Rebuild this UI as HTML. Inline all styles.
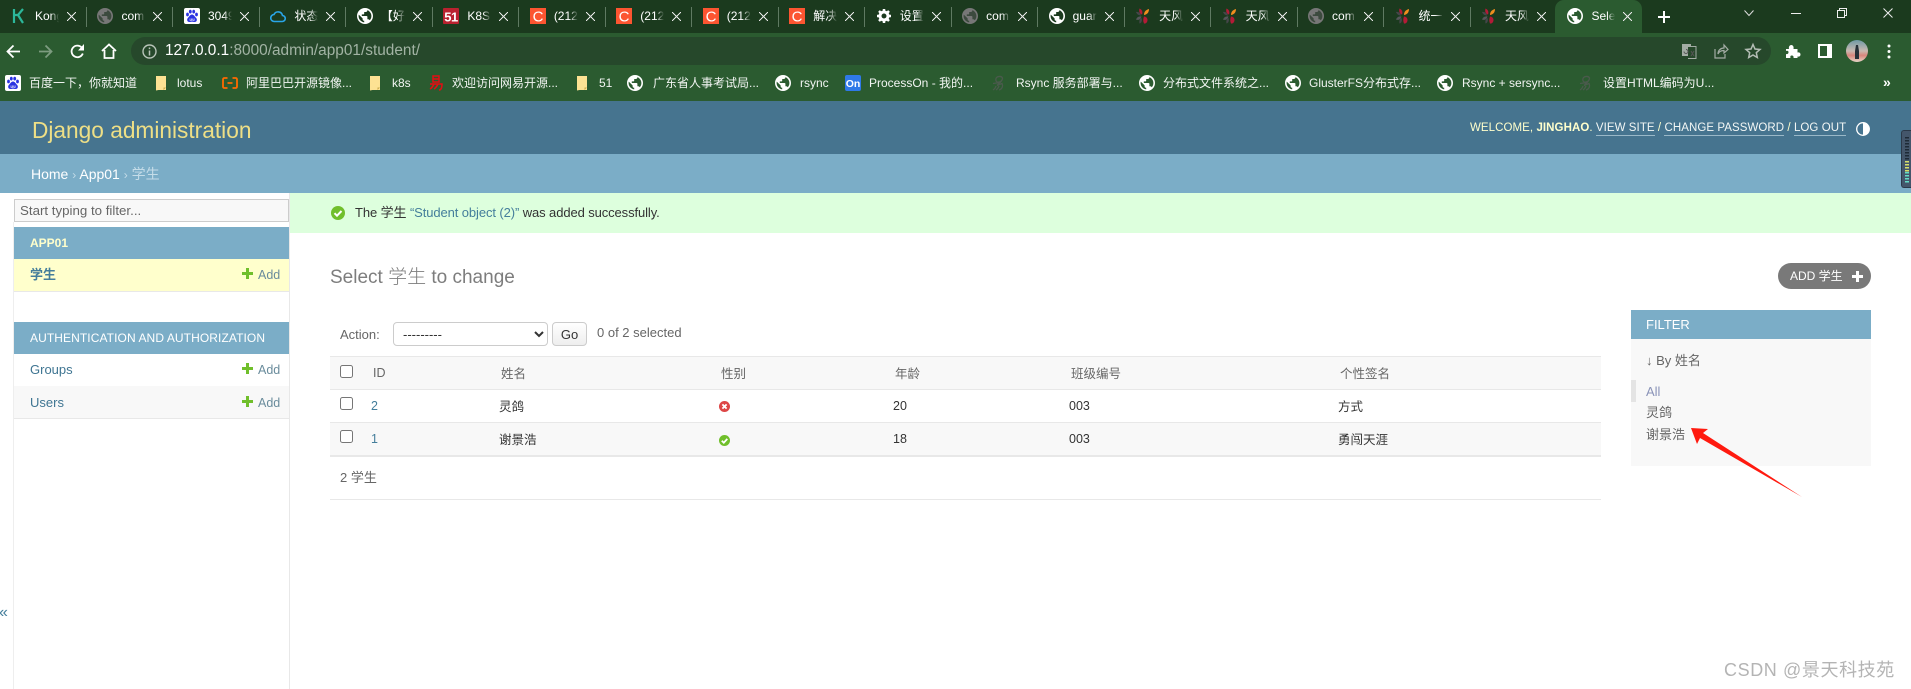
<!DOCTYPE html>
<html lang="zh"><head><meta charset="utf-8"><title>Select 学生 to change</title>
<style>
*{box-sizing:border-box}
html,body{margin:0;padding:0;width:1911px;height:689px;overflow:hidden;background:#fff;font-family:"Liberation Sans","Noto Sans CJK SC",sans-serif;font-size:13px;color:#333}
.a{position:absolute;white-space:nowrap;line-height:20px}
svg.a{line-height:0;overflow:visible}
a{text-decoration:none;color:#447e9b}
#strip{position:absolute;left:0;top:0;width:1911px;height:33px;background:#1b3a1e}
#tb{position:absolute;left:0;top:33px;width:1911px;height:68px;background:#2b5b30}
#pill{position:absolute;left:131px;top:37px;width:1640px;height:28px;border-radius:14px;background:#26482b}
.t{position:absolute;top:0;width:86px;height:33px;color:#fff;font-size:12px}
.t svg{position:absolute;left:11px;top:8px;width:16px;height:16px}
.t span{position:absolute;left:35px;top:6px;width:24px;line-height:20px;overflow:hidden;white-space:nowrap}
.t span::after{content:"";position:absolute;right:0;top:0;width:8px;height:20px;background:linear-gradient(90deg,rgba(27,58,30,0),#1b3a1e)}
.t.on span::after{background:linear-gradient(90deg,rgba(43,91,48,0),#2b5b30)}
.t i{position:absolute;left:67px;top:12px;width:9px;height:9px;background:
 linear-gradient(45deg,transparent 46%,#e8e8e8 46%,#e8e8e8 54%,transparent 54%),
 linear-gradient(-45deg,transparent 46%,#e8e8e8 46%,#e8e8e8 54%,transparent 54%)}
.t b{position:absolute;left:86px;top:7px;width:1px;height:20px;background:#5f7a62}
.bm{color:#f2f5f2;font-size:12px;top:73px}
.bi{position:absolute;top:75px;width:16px;height:16px}
#hd{position:absolute;left:0;top:101px;width:1911px;height:53px;background:#46748f}
#bc{position:absolute;left:0;top:154px;width:1911px;height:39px;background:#7badc7}
#msg{position:absolute;left:290px;top:193px;width:1621px;height:40px;background:#dfd}
#sideline{position:absolute;left:13px;top:222px;width:1px;height:467px;background:#eee}
#sideline2{position:absolute;left:289px;top:193px;width:1px;height:496px;background:#e8e8e8}
.cap{position:absolute;left:14px;width:275px;height:32px;background:#7badc7}
.row{position:absolute;left:14px;width:275px;height:33px;border-bottom:1px solid #e8e8e8}
table{position:absolute;left:330px;top:356px;width:1271px;border-collapse:separate;border-spacing:0;table-layout:fixed;font-size:12.5px}
th{height:34px;padding:0 0 0 2px;font-weight:400;color:#666;background:#f8f8f8;border-top:1px solid #e8e8e8;border-bottom:1px solid #e8e8e8;text-align:left}
td{height:33px;padding:0;border-bottom:1px solid #e8e8e8}
tr.z td{background:#f8f8f8;height:34px;border-bottom:2px solid #e8e8e8}
input[type=checkbox]{margin:0 0 0 10px;width:13px;height:13px;position:relative;top:-1px;accent-color:#fff}
th input[type=checkbox]{margin-left:8px;top:0}
.c{position:relative;top:-1px}
input::placeholder{color:#666}
</style></head><body>
<svg width="0" height="0" style="position:absolute"><defs>
<symbol id="gw" viewBox="2 2 20 20"><path fill="#fff" d="M12 2C6.480 2 2 6.480 2 12s4.480 10 10 10 10-4.480 10-10S17.520 2 12 2zm-1 17.930c-3.950-.49-7-3.850-7-7.930 0-.62.08-1.210.21-1.790L9 15v1c0 1.100.9 2 2 2v1.930zm6.900-2.540c-.26-.81-1-1.390-1.900-1.390h-1v-3c0-.55-.45-1-1-1H8v-2h2c.55 0 1-.45 1-1V7h2c1.100 0 2-.9 2-2v-.41c2.930 1.190 5 4.060 5 7.410 0 2.080-.8 3.970-2.100 5.390z"/></symbol>
<symbol id="gg" viewBox="2 2 20 20"><circle cx="12" cy="12" r="9" fill="#3c4a3e"/><path fill="#777" d="M12 2C6.480 2 2 6.480 2 12s4.480 10 10 10 10-4.480 10-10S17.520 2 12 2zm-1 17.930c-3.950-.49-7-3.850-7-7.930 0-.62.08-1.210.21-1.790L9 15v1c0 1.100.9 2 2 2v1.930zm6.900-2.540c-.26-.81-1-1.390-1.900-1.390h-1v-3c0-.55-.45-1-1-1H8v-2h2c.55 0 1-.45 1-1V7h2c1.100 0 2-.9 2-2v-.41c2.930 1.190 5 4.060 5 7.410 0 2.080-.8 3.970-2.100 5.390z"/></symbol>
<symbol id="bd" viewBox="0 0 16 16"><rect width="16" height="16" rx="2" fill="#fff"/><g fill="#2932e1"><ellipse cx="3.500" cy="6.500" rx="1.400" ry="1.900"/><ellipse cx="6.300" cy="3.600" rx="1.400" ry="1.900"/><ellipse cx="9.700" cy="3.600" rx="1.400" ry="1.900"/><ellipse cx="12.500" cy="6.500" rx="1.400" ry="1.900"/><path d="M8 6.500c2 0 2.500 2 4 3.200 1.500 1.500 1 4.300-1.500 4.300-1 0-1.500-.3-2.500-.3s-1.500.3-2.500.3c-2.500 0-3-2.800-1.500-4.300C5.500 8.500 6 6.500 8 6.500z"/></g><path d="M6 10.500v2h1.500v-2M8.800 10.500v2h1.300v-2" stroke="#fff" fill="none" stroke-width=".6"/></symbol>
<symbol id="tf" viewBox="0 0 16 16"><path d="M9 7c0-3 1.500-5 5-6 0 3-1.500 5.500-5 6z" fill="#ef8d1e"/><path d="M9 8.500c2 0 3.500 1.500 3.500 3.500S11 16 9 15.500c-1-2-1-4.500 0-7z" fill="#b31b37"/><path d="M7 6.500C5 6 3.500 4 4.500.5 7 1.500 8 4 7 6.500z" fill="#b31b37"/><path d="M6.500 8.500C4 8 2 9 1 11.500c2 1 4.500 .3 5.500-3z" fill="#55565a"/><path d="M6.500 10c-2 1-2.500 3-2 5.500 2-.5 3-3 2-5.500z" fill="#45464a"/><path d="M6 7.500C4 7.500 2 6.500 1 4c2.500-.5 4.500 1 5 3.500z" fill="#45464a"/></symbol>
<symbol id="fo" viewBox="0 0 16 16"><path d="M3 1h7l3 0v14H5.500L3 15.500z" fill="#fde293"/><path d="M10.500 15v-2.500H13z" fill="#c9a94a"/></symbol>
<symbol id="yu" viewBox="0 0 16 16"><path d="M5.500 2.500c2-1.500 5-1.500 6 .5 0 3-2.500 4.500-5.500 4-1.500-1-1.500-3-.5-4.500zM2 8.500l7-1-3 3 5-2c1.500 3-.5 6-3 6.500M5 11c-.5 2-1.500 3-3 4M8 11c-.5 1.500-1.500 3-3 4" fill="none" stroke="#4a5a4c" stroke-width="1.300"/></symbol>
</defs></svg>

<div id="strip">
<div class="t" style="left:0"><svg viewBox="0 0 16 16"><path d="M3 1v14M3 7h4l5-6M7 7l5 8" fill="none" stroke="#2cb79a" stroke-width="2.200"/></svg><span>Kong</span><i></i><b></b></div>
<div class="t" style="left:86.470px"><svg><use href="#gg"/></svg><span>com</span><i></i><b></b></div>
<div class="t" style="left:172.940px"><svg><use href="#bd"/></svg><span>3049</span><i></i><b></b></div>
<div class="t" style="left:259.410px"><svg viewBox="0 0 16 16"><path d="M4.500 13.500H12a3 3 0 0 0 .5-6A4.500 4.500 0 0 0 4 6.500a3.500 3.500 0 0 0 .5 7z" fill="none" stroke="#2aa6e8" stroke-width="1.600"/></svg><span>状态</span><i></i><b></b></div>
<div class="t" style="left:345.880px"><svg><use href="#gw"/></svg><span>【好</span><i></i><b></b></div>
<div class="t" style="left:432.350px"><svg viewBox="0 0 16 16"><rect width="16" height="16" rx="1" fill="#b9222f"/><text x="8" y="13.500" font-size="13" font-weight="700" fill="#fff" text-anchor="middle" font-family="Liberation Sans" letter-spacing="-.5">51</text></svg><span>K8S</span><i></i><b></b></div>
<div class="t" style="left:518.820px"><svg viewBox="0 0 16 16"><rect width="16" height="16" fill="#fc5531"/><text x="8" y="13.500" font-size="15" fill="#fff" text-anchor="middle" font-family="Liberation Sans">C</text></svg><span>(212</span><i></i><b></b></div>
<div class="t" style="left:605.290px"><svg viewBox="0 0 16 16"><rect width="16" height="16" fill="#fc5531"/><text x="8" y="13.500" font-size="15" fill="#fff" text-anchor="middle" font-family="Liberation Sans">C</text></svg><span>(212</span><i></i><b></b></div>
<div class="t" style="left:691.760px"><svg viewBox="0 0 16 16"><rect width="16" height="16" fill="#fc5531"/><text x="8" y="13.500" font-size="15" fill="#fff" text-anchor="middle" font-family="Liberation Sans">C</text></svg><span>(212</span><i></i><b></b></div>
<div class="t" style="left:778.230px"><svg viewBox="0 0 16 16"><rect width="16" height="16" fill="#fc5531"/><text x="8" y="13.500" font-size="15" fill="#fff" text-anchor="middle" font-family="Liberation Sans">C</text></svg><span>解决</span><i></i><b></b></div>
<div class="t" style="left:864.700px"><svg viewBox="0 0 16 16"><circle cx="8" cy="8" r="4" fill="none" stroke="#fff" stroke-width="3"/><path d="M8 1v3M8 12v3M1 8h3M12 8h3M3 3l2 2M11 11l2 2M13 3l-2 2M5 11l-2 2" stroke="#fff" stroke-width="2.500"/></svg><span>设置</span><i></i><b></b></div>
<div class="t" style="left:951.170px"><svg><use href="#gg"/></svg><span>com</span><i></i><b></b></div>
<div class="t" style="left:1037.640px"><svg><use href="#gw"/></svg><span>guar</span><i></i><b></b></div>
<div class="t" style="left:1124.110px"><svg><use href="#tf"/></svg><span>天风</span><i></i><b></b></div>
<div class="t" style="left:1210.580px"><svg><use href="#tf"/></svg><span>天风</span><i></i><b></b></div>
<div class="t" style="left:1297.050px"><svg><use href="#gg"/></svg><span>com</span><i></i><b></b></div>
<div class="t" style="left:1383.520px"><svg><use href="#tf"/></svg><span>统一</span><i></i><b></b></div>
<div class="t" style="left:1469.990px"><svg><use href="#tf"/></svg><span>天风</span><i></i></div>
<div style="position:absolute;left:1555px;top:0;width:87px;height:37px;background:#2b5b30;border-radius:9px 9px 0 0"></div>
<div class="t on" style="left:1556.460px"><svg><use href="#gw"/></svg><span>Select</span><i></i></div>
<svg class="a" style="left:1657px;top:10px" width="14" height="14" viewBox="0 0 14 14"><path d="M7 1v12M1 7h12" stroke="#fff" stroke-width="2"/></svg>
<svg class="a" style="left:1744px;top:10px" width="10" height="6" viewBox="0 0 10 6"><path d="M.5.5L5 5.500 9.500.5" fill="none" stroke="#ddd" stroke-width="1"/></svg>
<svg class="a" style="left:1791px;top:13px" width="10" height="1"><rect width="10" height="1" fill="#eee"/></svg>
<svg class="a" style="left:1837px;top:8px" width="10" height="10" viewBox="0 0 10 10"><path d="M.5 2.500h7v7h-7zM2.500 2.500v-2h7v7h-2" fill="none" stroke="#eee"/></svg>
<svg class="a" style="left:1883px;top:8px" width="10" height="10" viewBox="0 0 10 10"><path d="M.5.5l9 9M9.500.5l-9 9" stroke="#eee"/></svg>
</div>

<div id="tb"></div><div id="pill"></div>
<svg class="a" style="left:6px;top:44px" width="15" height="15" viewBox="0 0 15 15"><path d="M14 7.500H2M7.500 1.500l-6 6 6 6" fill="none" stroke="#fff" stroke-width="1.800"/></svg>
<svg class="a" style="left:38px;top:44px" width="15" height="15" viewBox="0 0 15 15"><path d="M1 7.500h12M7.500 1.500l6 6-6 6" fill="none" stroke="#7d9c80" stroke-width="1.800"/></svg>
<svg class="a" style="left:70px;top:44px" width="15" height="15" viewBox="0 0 15 15"><path d="M12.800 9.500A5.800 5.800 0 1 1 11.500 3.300" fill="none" stroke="#fff" stroke-width="1.800"/><path d="M14 0v6.500H8z" fill="#fff"/></svg>
<svg class="a" style="left:101px;top:43px" width="16" height="16" viewBox="0 0 16 16"><path d="M1 8l7-6.500L15 8M3.500 7v8h9V7" fill="none" stroke="#fff" stroke-width="1.800"/></svg>
<svg class="a" style="left:142px;top:44px" width="15" height="15" viewBox="0 0 15 15"><circle cx="7.500" cy="7.500" r="6.500" fill="none" stroke="#b8c4b9" stroke-width="1.400"/><path d="M7.500 6.500v5M7.500 3.500v1.600" stroke="#b8c4b9" stroke-width="1.500"/></svg>
<div class="a" style="left:165px;top:41px;font-size:15.400px;color:#a2b3a4"><span style="color:#fff">127.0.0.1</span>:8000/admin/app01/student/</div>
<svg class="a" style="left:1681px;top:43px" width="16" height="16" viewBox="0 0 16 16"><rect x="1" y="1" width="9" height="12" fill="#a3aca4"/><path d="M7 3.500h8v12H7" fill="#26482b" stroke="#a3aca4"/><path d="M3 8.500a2 2 0 1 0 2-2M10 8l3 5M13 8l-3 5" stroke="#555" fill="none"/></svg>
<svg class="a" style="left:1713px;top:43px" width="16" height="16" viewBox="0 0 16 16"><path d="M2 6v9h10v-4M5 11c0-4 3-6 6-6V2l4 4.500L11 10V7.500c-3 0-5 1-6 3.500z" fill="none" stroke="#a3aca4" stroke-width="1.200"/></svg>
<svg class="a" style="left:1745px;top:43px" width="16" height="16" viewBox="0 0 16 16"><path d="M8 1.500l2 4.500 5 .5-3.700 3.200 1 4.800L8 12l-4.300 2.500 1-4.800L1 6.500 6 6z" fill="none" stroke="#b4bdb5" stroke-width="1.500"/></svg>
<svg class="a" style="left:1785px;top:43px" width="16" height="16" viewBox="0 0 16 16"><path d="M1 6h3c-.5-2 .5-4 2.300-4S9 4 8.500 6h4v3.500c2-.5 3 .6 3 2s-1 2.500-3 2V15h-4c.5-1.500-.5-2.500-1.800-2.500S5 13.500 5.500 15H1v-4c1.500.5 2.500-.5 2.500-1.800S2.500 7.500 1 8z" fill="#fff"/></svg>
<svg class="a" style="left:1818px;top:44px" width="14" height="14" viewBox="0 0 14 14"><path d="M0 0h14v14H0zM2 2v10h7V2z" fill="#fff" fill-rule="evenodd"/></svg>
<svg class="a" style="left:1846px;top:40px" width="22" height="22" viewBox="0 0 22 22"><defs><linearGradient id="av" x1="0" y1="0" x2="0" y2="1"><stop offset="0" stop-color="#6f9aa5"/><stop offset=".5" stop-color="#c9b9b0"/><stop offset=".7" stop-color="#d8857c"/><stop offset="1" stop-color="#e6d6c8"/></linearGradient></defs><circle cx="11" cy="11" r="11" fill="url(#av)"/><path d="M10 5h2l1 6v8h-4V11z" fill="#263038"/></svg>
<svg class="a" style="left:1887px;top:44px" width="4" height="15" viewBox="0 0 4 15"><circle cx="2" cy="2" r="1.500" fill="#fff"/><circle cx="2" cy="7.500" r="1.500" fill="#fff"/><circle cx="2" cy="13" r="1.500" fill="#fff"/></svg>

<svg class="bi" style="left:5px"><use href="#bd"/></svg><div class="a bm" style="left:29px">百度一下，你就知道</div>
<svg class="bi" style="left:153px"><use href="#fo"/></svg><div class="a bm" style="left:177px">lotus</div>
<svg class="bi" style="left:222px" viewBox="0 0 16 16"><path d="M5.500 3H2.500Q1 3 1 4.500v7Q1 13 2.500 13h3M10.500 3h3Q15 3 15 4.500v7q0 1.500-1.500 1.500h-3M5.500 8h5" fill="none" stroke="#ff6a00" stroke-width="1.800"/></svg><div class="a bm" style="left:246px">阿里巴巴开源镜像...</div>
<svg class="bi" style="left:367px"><use href="#fo"/></svg><div class="a bm" style="left:392px">k8s</div>
<svg class="bi" style="left:428px" viewBox="0 0 16 16"><path d="M5 1h6v6H5zM5 4h6M2 9h12c0 4-1 6-3 6M6 9c-1 2-2 4-4 5M10 9c-1 2-2 4-4 5" fill="none" stroke="#e50d12" stroke-width="1.500"/></svg><div class="a bm" style="left:452px">欢迎访问网易开源...</div>
<svg class="bi" style="left:574px"><use href="#fo"/></svg><div class="a bm" style="left:599px">51</div>
<svg class="bi" style="left:627px"><use href="#gw"/></svg><div class="a bm" style="left:653px">广东省人事考试局...</div>
<svg class="bi" style="left:775px"><use href="#gw"/></svg><div class="a bm" style="left:800px">rsync</div>
<svg class="bi" style="left:845px" viewBox="0 0 16 16"><rect width="16" height="16" rx="2" fill="#2f79e8"/><text x="8" y="12" font-size="10.500" font-weight="700" fill="#fff" text-anchor="middle" font-family="Liberation Sans">On</text></svg><div class="a bm" style="left:869px">ProcessOn - 我的...</div>
<svg class="bi" style="left:991px"><use href="#yu"/></svg><div class="a bm" style="left:1016px">Rsync 服务部署与...</div>
<svg class="bi" style="left:1139px"><use href="#gw"/></svg><div class="a bm" style="left:1163px">分布式文件系统之...</div>
<svg class="bi" style="left:1285px"><use href="#gw"/></svg><div class="a bm" style="left:1309px">GlusterFS分布式存...</div>
<svg class="bi" style="left:1437px"><use href="#gw"/></svg><div class="a bm" style="left:1462px">Rsync + sersync...</div>
<svg class="bi" style="left:1578px"><use href="#yu"/></svg><div class="a bm" style="left:1603px">设置HTML编码为U...</div>
<div class="a" style="left:1883px;top:72px;color:#fff;font-size:14px;font-weight:700">»</div>

<div id="hd"></div><div id="bc"></div>
<div class="a" style="left:32px;top:120px;font-size:22.700px;font-weight:300;color:#eedf86">Django administration</div>
<div class="a" style="left:1470px;top:118px;font-size:11.500px;color:#ffc;letter-spacing:.07px">WELCOME, <b>JINGHAO</b>. <span style="border-bottom:1px solid #9ab8c8;padding-bottom:1px;color:#f3f7f5">VIEW SITE</span> / <span style="border-bottom:1px solid #9ab8c8;padding-bottom:1px;color:#f3f7f5">CHANGE PASSWORD</span> / <span style="border-bottom:1px solid #9ab8c8;padding-bottom:1px;color:#f3f7f5">LOG OUT</span></div>
<svg class="a" style="left:1856px;top:122px" width="14" height="14" viewBox="0 0 14 14"><circle cx="7" cy="7" r="6.300" fill="#46748f" stroke="#fff" stroke-width="1.300"/><path d="M7 1a6 6 0 0 1 0 12z" fill="#fff"/></svg>
<div class="a" style="left:31px;top:164px;font-size:14px;color:#fff">Home <span style="color:#c4dce8;font-size:12px">›</span> App01 <span style="color:#c4dce8;font-size:12px">›</span> <span style="color:#c4dce8">学生</span></div>

<div id="sideline"></div><div id="sideline2"></div>
<input style="position:absolute;left:14px;top:199px;width:275px;height:23px;border:1px solid #ccc;background:#f8f8f8;padding:0 5px;font:13.300px 'Liberation Sans',sans-serif;color:#333" placeholder="Start typing to filter...">
<div class="cap" style="top:227px"></div>
<div class="a" style="left:30px;top:233px;font-size:12px;font-weight:700;color:#ffc">APP01</div>
<div class="row" style="top:259px;background:#ffc"></div>
<a class="a" style="left:30px;top:265px;font-size:13px;font-weight:700;color:#447e9b">学生</a>
<div class="cap" style="top:322px"></div>
<div class="a" style="left:30px;top:328px;font-size:12px;color:#fff;letter-spacing:.09px">AUTHENTICATION AND AUTHORIZATION</div>
<div class="row" style="top:354px"></div>
<a class="a" style="left:30px;top:360px;font-size:13px;color:#3f7592">Groups</a>
<div class="row" style="top:386px;background:#f8f8f8;border-top:0"></div>
<a class="a" style="left:30px;top:393px;font-size:13px;color:#3f7592">Users</a>
<svg class="a" style="left:242px;top:268px" width="11" height="11" viewBox="0 0 11 11"><path d="M5.500 0v11M0 5.500h11" stroke="#70bf2b" stroke-width="3"/></svg><a class="a" style="left:258px;top:265px;color:#6a8c9c;font-size:12.500px">Add</a>
<svg class="a" style="left:242px;top:363px" width="11" height="11" viewBox="0 0 11 11"><path d="M5.500 0v11M0 5.500h11" stroke="#70bf2b" stroke-width="3"/></svg><a class="a" style="left:258px;top:360px;color:#6a8c9c;font-size:12.500px">Add</a>
<svg class="a" style="left:242px;top:396px" width="11" height="11" viewBox="0 0 11 11"><path d="M5.500 0v11M0 5.500h11" stroke="#70bf2b" stroke-width="3"/></svg><a class="a" style="left:258px;top:393px;color:#6a8c9c;font-size:12.500px">Add</a>
<div class="a" style="left:-1px;top:603px;color:#447e9b;font-size:16px">«</div>

<div id="msg"></div>
<svg class="a" style="left:331px;top:206px" width="14" height="14" viewBox="0 0 14 14"><circle cx="7" cy="7" r="7" fill="#70bf2b"/><path d="M3.500 7.200l2.500 2.500 4.500-4.700" fill="none" stroke="#fff" stroke-width="2"/></svg>
<div class="a" style="left:355px;top:203px;font-size:13px;color:#333;letter-spacing:-.1px">The 学生 <a>“Student object (2)”</a> was added successfully.</div>
<div class="a" style="left:330px;top:267px;font-size:19px;font-weight:300;color:#7d7d7d;line-height:22px">Select 学生 to change</div>
<div class="a" style="left:1778px;top:263px;width:93px;height:26px;border-radius:13px;background:#797979;color:#fff;font-size:12px;line-height:26px;padding-left:12px">ADD 学生</div>
<svg class="a" style="left:1852px;top:271px" width="11" height="11" viewBox="0 0 11 11"><path d="M5.500 0v11M0 5.500h11" stroke="#fff" stroke-width="3"/></svg>

<div class="a" style="left:340px;top:325px;font-size:13px;color:#666">Action:</div>
<select style="position:absolute;left:393px;top:322px;width:155px;height:24px;border:1px solid #ccc;border-radius:4px;background:#fff;padding-left:5px;font:13px 'Liberation Sans',sans-serif;color:#333"><option>---------</option></select>
<button style="position:absolute;left:552px;top:322px;width:35px;height:24px;border:1px solid #ccc;border-radius:4px;background:linear-gradient(#fff,#eee);font:13px 'Liberation Sans',sans-serif;color:#333;padding:0">Go</button>
<div class="a" style="left:597px;top:323px;font-size:13px;color:#666">0 of 2 selected</div>

<table><colgroup><col style="width:41px"><col style="width:128px"><col style="width:220px"><col style="width:174px"><col style="width:176px"><col style="width:269px"><col style="width:263px"></colgroup>
<thead><tr><th><input type="checkbox"></th><th>ID</th><th><span class="c">姓名</span></th><th><span class="c">性别</span></th><th><span class="c">年龄</span></th><th><span class="c">班级编号</span></th><th><span class="c">个性签名</span></th></tr></thead>
<tbody><tr><td><input type="checkbox"></td><td><a>2</a></td><td><span class="c">灵鸽</span></td><td><svg width="11" height="11" viewBox="0 0 11 11" style="vertical-align:-2px"><circle cx="5.500" cy="5.500" r="5.500" fill="#dd4646"/><path d="M3.400 3.400l4.200 4.200M7.600 3.400l-4.200 4.200" stroke="#fff" stroke-width="1.800"/></svg></td><td>20</td><td>003</td><td><span class="c">方式</span></td></tr>
<tr class="z"><td><input type="checkbox"></td><td><a>1</a></td><td><span class="c">谢景浩</span></td><td><svg width="11" height="11" viewBox="0 0 11 11" style="vertical-align:-3px"><circle cx="5.500" cy="5.500" r="5.500" fill="#70bf2b"/><path d="M2.800 5.700l2 2 3.500-3.800" fill="none" stroke="#fff" stroke-width="1.800"/></svg></td><td>18</td><td>003</td><td><span class="c">勇闯天涯</span></td></tr></tbody></table>
<div class="a" style="left:340px;top:468px;font-size:13px;color:#666">2 学生</div>
<div style="position:absolute;left:330px;top:499px;width:1271px;height:1px;background:#e8e8e8"></div>

<div style="position:absolute;left:1631px;top:310px;width:240px;height:156px;background:#f8f8f8"></div>
<div style="position:absolute;left:1631px;top:310px;width:240px;height:29px;background:#7badc7"></div>
<div class="a" style="left:1646px;top:315px;font-size:13px;color:#fff">FILTER</div>
<div class="a" style="left:1646px;top:351px;font-size:13px;color:#666">↓ By 姓名</div>
<div style="position:absolute;left:1631px;top:380px;width:5px;height:22px;background:#e4e4e4"></div>
<div class="a" style="left:1646px;top:382px;font-size:13px;color:#8a93b8">All</div>
<div class="a" style="left:1646px;top:403px;font-size:13px;color:#666">灵鸽</div>
<div class="a" style="left:1646px;top:425px;font-size:13px;color:#666">谢景浩</div>
<svg class="a" style="left:0;top:0;pointer-events:none" width="1911" height="689"><path d="M1691 428l17 1-5 4 99 64-102-59-3 6z" fill="#ff1a0f"/></svg>

<div style="position:absolute;left:1901px;top:130px;width:10px;height:58px;background:#44566b;border:1px solid #2b3848;border-right:0;border-radius:3px 0 0 3px"></div>
<div style="position:absolute;left:1905px;top:137px;width:4px;height:23px;background:repeating-linear-gradient(#1e2a36 0,#1e2a36 1.500px,transparent 1.500px,transparent 3px)"></div>
<div style="position:absolute;left:1905px;top:161px;width:4px;height:11px;background:repeating-linear-gradient(#d7e06a 0,#d7e06a 1.500px,transparent 1.500px,transparent 3px)"></div>
<div style="position:absolute;left:1905px;top:172px;width:4px;height:11px;background:repeating-linear-gradient(#63dcc7 0,#63dcc7 1.500px,transparent 1.500px,transparent 3px)"></div>

<div class="a" style="left:1724px;top:660px;font-size:18px;color:#b4b4b4;letter-spacing:.6px">CSDN @景天科技苑</div>
</body></html>
